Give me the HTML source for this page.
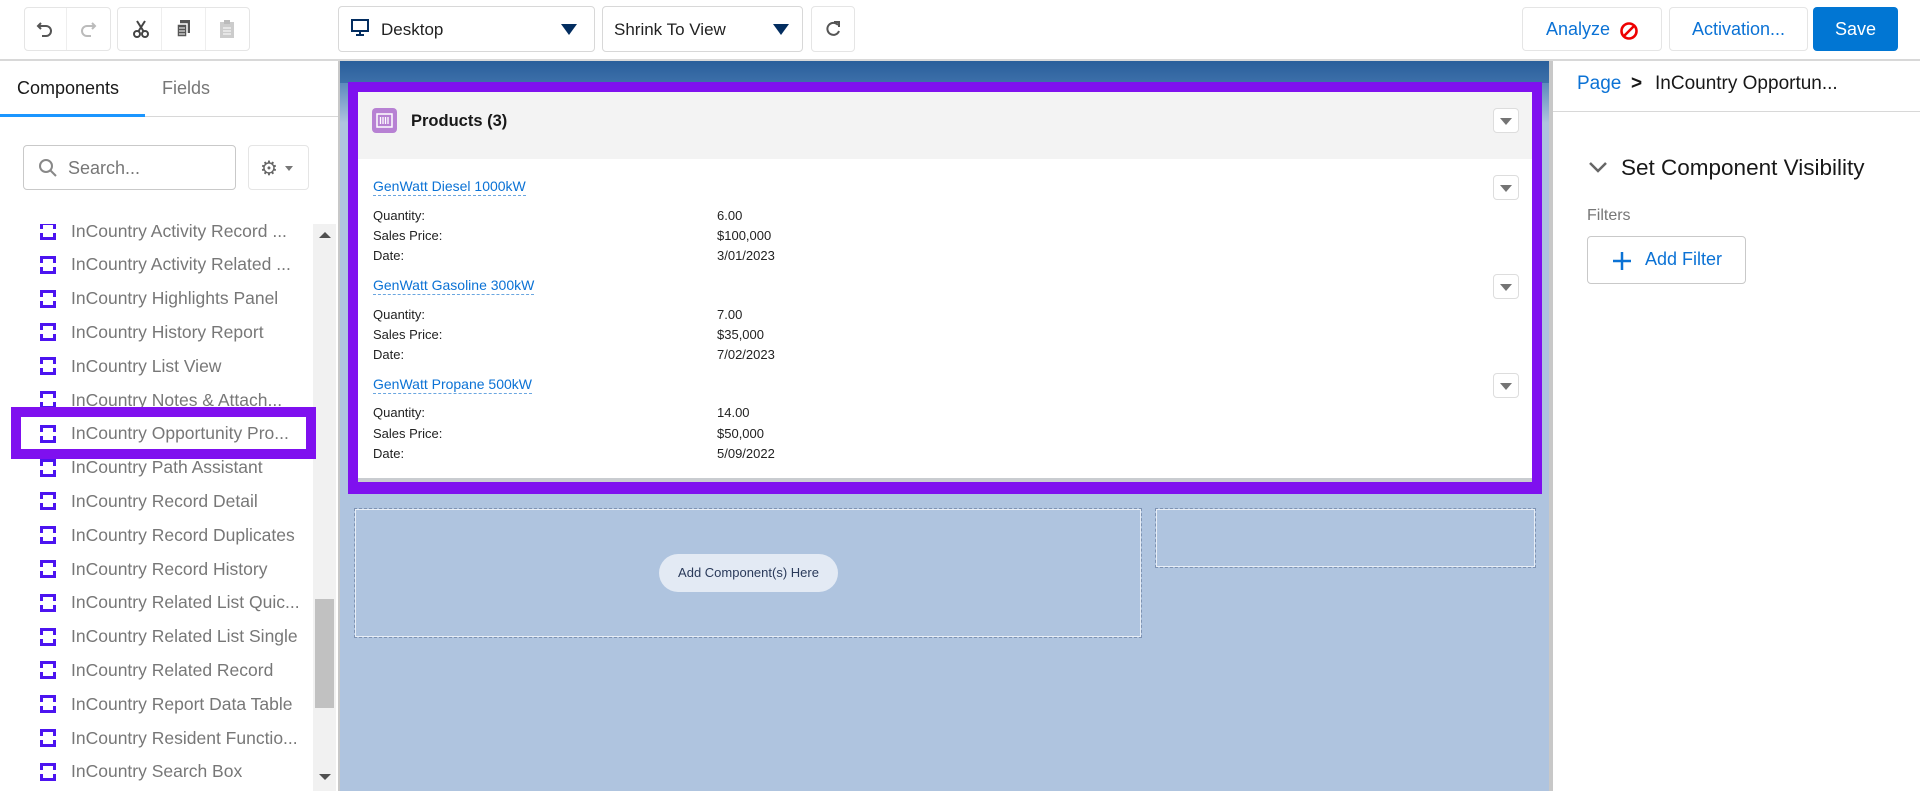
<!DOCTYPE html>
<html><head><meta charset="utf-8"><style>
*{box-sizing:border-box;margin:0;padding:0}
body{width:1920px;height:791px;overflow:hidden;background:#fff;font-family:"Liberation Sans",sans-serif;position:relative;color:#181818}
.a{position:absolute}
.btn{position:absolute;border:1px solid #e5e5e5;border-radius:4px;background:#fff}
.item{position:absolute;left:40px;height:30px;display:flex;align-items:center;font-size:17.5px;color:#777;white-space:nowrap}
.item svg{margin-right:15px}
.lbl{position:absolute;font-size:13px;color:#222}
.link{position:absolute;font-size:14px;color:#0b72d5;border-bottom:1px dashed #6aa6e0;line-height:17px}
.dd{position:absolute;left:1493px;width:26px;height:25px;border:1px solid #ddd;border-radius:4px;background:#fff}
.dd:after{content:"";position:absolute;left:6px;top:9px;border-left:6px solid transparent;border-right:6px solid transparent;border-top:7px solid #747474}
</style></head><body>
<div class="btn" style="left:24px;top:7px;width:87px;height:44px"></div>
<div class="a" style="left:66px;top:8px;width:1px;height:42px;background:#eee"></div>
<svg class="a" style="left:35px;top:19px" width="20" height="20" viewBox="0 0 20 20"><path d="M6 4 L3 7 L6 10 M3 7 H11 a5 5 0 0 1 0 10 H7" fill="none" stroke="#555" stroke-width="2"/></svg>
<svg class="a" style="left:78px;top:19px" width="20" height="20" viewBox="0 0 20 20"><path d="M14 4 L17 7 L14 10 M17 7 H9 a5 5 0 0 0 0 10 H13" fill="none" stroke="#bbb" stroke-width="2"/></svg>
<div class="btn" style="left:117px;top:7px;width:133px;height:44px"></div>
<div class="a" style="left:161px;top:8px;width:1px;height:42px;background:#eee"></div>
<div class="a" style="left:205px;top:8px;width:1px;height:42px;background:#eee"></div>
<svg class="a" style="left:130px;top:18px" width="22" height="22" viewBox="0 0 22 22"><circle cx="7" cy="16" r="3" fill="none" stroke="#444" stroke-width="2"/><circle cx="15" cy="16" r="3" fill="none" stroke="#444" stroke-width="2"/><path d="M8 14 L15 3 M14 14 L7 3" stroke="#444" stroke-width="2"/></svg>
<svg class="a" style="left:174px;top:18px" width="20" height="22" viewBox="0 0 20 22"><rect x="6" y="2" width="10" height="13" fill="#555"/><rect x="3" y="6" width="10" height="13" fill="#555" stroke="#fff" stroke-width="1.5"/><path d="M5 10h6M5 13h6M5 16h6" stroke="#fff"/></svg>
<svg class="a" style="left:217px;top:18px" width="20" height="22" viewBox="0 0 20 22"><rect x="3" y="4" width="14" height="16" fill="#ccc"/><rect x="7" y="2" width="6" height="4" fill="#bbb"/><path d="M6 10h8M6 13h8M6 16h8" stroke="#fff"/></svg>
<div class="btn" style="left:338px;top:6px;width:257px;height:46px;border-color:#d8d8d8"></div>
<svg class="a" style="left:351px;top:19px" width="18" height="18" viewBox="0 0 18 18"><rect x="1" y="1" width="16" height="11" fill="none" stroke="#032d60" stroke-width="2"/><path d="M9 12v3M5 16h8" stroke="#032d60" stroke-width="2"/></svg>
<div class="a" style="left:381px;top:20px;font-size:17px;color:#222">Desktop</div>
<div class="a" style="left:561px;top:24px;border-left:8px solid transparent;border-right:8px solid transparent;border-top:11px solid #032d60"></div>
<div class="btn" style="left:602px;top:6px;width:201px;height:46px;border-color:#d8d8d8"></div>
<div class="a" style="left:614px;top:20px;font-size:17px;color:#222">Shrink To View</div>
<div class="a" style="left:773px;top:24px;border-left:8px solid transparent;border-right:8px solid transparent;border-top:11px solid #032d60"></div>
<div class="btn" style="left:811px;top:6px;width:44px;height:46px"></div>
<svg class="a" style="left:823px;top:19px" width="20" height="20" viewBox="0 0 20 20"><path d="M15 6 A6 6 0 1 0 16 12" fill="none" stroke="#555" stroke-width="2"/><path d="M11 3 H16 V8" fill="none" stroke="#555" stroke-width="2"/></svg>
<div class="btn" style="left:1522px;top:7px;width:140px;height:44px"></div>
<div class="a" style="left:1546px;top:19px;font-size:18px;color:#0b72d5">Analyze</div>
<svg class="a" style="left:1619px;top:21px" width="20" height="20" viewBox="0 0 20 20"><circle cx="10" cy="10" r="7.5" fill="none" stroke="#e00" stroke-width="2.6"/><path d="M5 15 L15 5" stroke="#e00" stroke-width="2.6"/></svg>
<div class="btn" style="left:1669px;top:7px;width:139px;height:44px"></div>
<div class="a" style="left:1692px;top:19px;font-size:18px;color:#0b72d5">Activation...</div>
<div class="a" style="left:1813px;top:7px;width:85px;height:44px;background:#0176d3;border-radius:4px;color:#fff;font-size:18px;text-align:center;line-height:44px">Save</div>
<div class="a" style="left:0;top:59px;width:1920px;height:2px;background:#d8d8d8"></div>
<div class="a" style="left:17px;top:78px;font-size:18px;color:#181818">Components</div>
<div class="a" style="left:162px;top:78px;font-size:18px;color:#777">Fields</div>
<div class="a" style="left:0;top:116px;width:338px;height:1px;background:#d8d8d8"></div>
<div class="a" style="left:0;top:114px;width:145px;height:3px;background:#1b96ff"></div>
<div class="btn" style="left:23px;top:145px;width:213px;height:45px;border-color:#c9c9c9"></div>
<svg class="a" style="left:38px;top:158px" width="20" height="20" viewBox="0 0 20 20"><circle cx="8" cy="8" r="6" fill="none" stroke="#888" stroke-width="2"/><path d="M12.5 12.5 L18 18" stroke="#888" stroke-width="2"/></svg>
<div class="a" style="left:68px;top:158px;font-size:18px;color:#777">Search...</div>
<div class="btn" style="left:248px;top:145px;width:61px;height:45px"></div>
<div class="a" style="left:260px;top:156px;font-size:20px;color:#666">⚙</div>
<div class="a" style="left:285px;top:166px;border-left:4px solid transparent;border-right:4px solid transparent;border-top:5px solid #777"></div>
<div class="a" style="left:313px;top:224px;width:23px;height:567px;background:#f1f1f1"></div>
<div class="a" style="left:315px;top:599px;width:19px;height:109px;background:#c1c1c1"></div>
<div class="a" style="left:319px;top:232px;border-left:6px solid transparent;border-right:6px solid transparent;border-bottom:6px solid #505050"></div>
<div class="a" style="left:319px;top:774px;border-left:6px solid transparent;border-right:6px solid transparent;border-top:6px solid #505050"></div>
<div class="a" style="left:0;top:224px;width:313px;height:567px;overflow:hidden">
<div id="list"></div></div>
<script>
var n=["InCountry Activity Record ...","InCountry Activity Related ...","InCountry Highlights Panel","InCountry History Report","InCountry List View","InCountry Notes & Attach...","InCountry Opportunity Pro...","InCountry Path Assistant","InCountry Record Detail","InCountry Record Duplicates","InCountry Record History","InCountry Related List Quic...","InCountry Related List Single","InCountry Related Record","InCountry Report Data Table","InCountry Resident Functio...","InCountry Search Box"];
var h="";for(var i=0;i<n.length;i++){h+='<div class="item" style="top:'+(-8+i*33.8)+'px"><svg width="16" height="18" viewBox="0 0 16 18"><path d="M0 0H16V3H3V7H0Z M16 18H0V15H13V11H16Z M13 7V3H16V7Z M0 11H3V15H0Z" fill="#4c14f0"/></svg>'+n[i].replace("&","&amp;")+'</div>';}
document.getElementById("list").innerHTML=h;
</script>
<div class="a" style="left:11px;top:407px;width:305px;height:52px;border:10px solid #7f10ef"></div>
<div class="a" style="left:338px;top:61px;width:1215px;height:730px;background:#afc4df;border-left:2px solid #c8c8c8;border-right:4px solid #c8c8c8"></div>
<div class="a" style="left:340px;top:61px;width:1209px;height:22px;background:linear-gradient(#2a5f9b,#3d70aa)"></div>
<div class="a" style="left:340px;top:83px;width:1209px;height:40px;background:linear-gradient(#5d8abd,#afc4df)"></div>
<div class="a" style="left:348px;top:82px;width:1194px;height:412px;background:#7f10ef"></div>
<div class="a" style="left:358px;top:92px;width:1174px;height:390px;background:#fff"></div>
<div class="a" style="left:358px;top:92px;width:1174px;height:67px;background:#f3f3f3"></div>
<div class="a" style="left:358px;top:478px;width:1174px;height:4px;background:#c9ccd0"></div>
<div class="a" style="left:372px;top:108px;width:25px;height:25px;background:#b781d3;border-radius:4px"></div>
<svg class="a" style="left:376px;top:112px" width="17" height="17" viewBox="0 0 17 17"><rect x="1" y="2" width="15" height="13" fill="none" stroke="#fff" stroke-width="1.5"/><path d="M4.5 5v7M7 5v7M9.5 5v7M12 5v7" stroke="#fff" stroke-width="1.3"/></svg>
<div class="a" style="left:411px;top:112px;font-size:16.5px;font-weight:bold;color:#181818">Products (3)</div>
<div class="dd" style="top:108px"></div>
<div class="dd" style="top:175px"></div>
<div class="dd" style="top:274px"></div>
<div class="dd" style="top:373px"></div>
<div class="link" style="left:373px;top:178px">GenWatt Diesel 1000kW</div>
<div class="lbl" style="left:373px;top:208px">Quantity:</div><div class="lbl" style="left:717px;top:208px">6.00</div>
<div class="lbl" style="left:373px;top:228px">Sales Price:</div><div class="lbl" style="left:717px;top:228px">$100,000</div>
<div class="lbl" style="left:373px;top:248px">Date:</div><div class="lbl" style="left:717px;top:248px">3/01/2023</div>
<div class="link" style="left:373px;top:277px">GenWatt Gasoline 300kW</div>
<div class="lbl" style="left:373px;top:307px">Quantity:</div><div class="lbl" style="left:717px;top:307px">7.00</div>
<div class="lbl" style="left:373px;top:327px">Sales Price:</div><div class="lbl" style="left:717px;top:327px">$35,000</div>
<div class="lbl" style="left:373px;top:347px">Date:</div><div class="lbl" style="left:717px;top:347px">7/02/2023</div>
<div class="link" style="left:373px;top:376px">GenWatt Propane 500kW</div>
<div class="lbl" style="left:373px;top:405px">Quantity:</div><div class="lbl" style="left:717px;top:405px">14.00</div>
<div class="lbl" style="left:373px;top:426px">Sales Price:</div><div class="lbl" style="left:717px;top:426px">$50,000</div>
<div class="lbl" style="left:373px;top:446px">Date:</div><div class="lbl" style="left:717px;top:446px">5/09/2022</div>
<div class="a" style="left:354px;top:508px;width:788px;height:130px;border:1px dashed #7e93b3;outline:1px solid #e8eef6;outline-offset:-2px"></div>
<div class="a" style="left:1155px;top:508px;width:381px;height:60px;border:1px dashed #7e93b3;outline:1px solid #e8eef6;outline-offset:-2px"></div>
<div class="a" style="left:659px;top:554px;width:179px;height:38px;background:#e3eaf4;border-radius:19px;font-size:13px;color:#2a3a5a;text-align:center;line-height:38px">Add Component(s) Here</div>
<div class="a" style="left:1577px;top:73px;font-size:19px;color:#0b72d5">Page</div>
<div class="a" style="left:1631px;top:73px;font-size:19px;font-weight:bold;color:#181818">&gt;</div>
<div class="a" style="left:1655px;top:73px;font-size:19px;color:#181818">InCountry Opportun...</div>
<div class="a" style="left:1553px;top:111px;width:367px;height:1px;background:#d8d8d8"></div>
<svg class="a" style="left:1588px;top:160px" width="20" height="14" viewBox="0 0 20 14"><path d="M2 3 L10 11 L18 3" fill="none" stroke="#666" stroke-width="2.5"/></svg>
<div class="a" style="left:1621px;top:155px;font-size:22.5px;color:#181818">Set Component Visibility</div>
<div class="a" style="left:1587px;top:207px;font-size:16px;color:#777">Filters</div>
<div class="btn" style="left:1587px;top:236px;width:159px;height:48px;border-color:#c9c9c9"></div>
<svg class="a" style="left:1612px;top:251px" width="20" height="20" viewBox="0 0 20 20"><path d="M10 1v18M1 10h18" stroke="#0b72d5" stroke-width="2.5"/></svg>
<div class="a" style="left:1645px;top:249px;font-size:18px;color:#0b72d5">Add Filter</div>
</body></html>
